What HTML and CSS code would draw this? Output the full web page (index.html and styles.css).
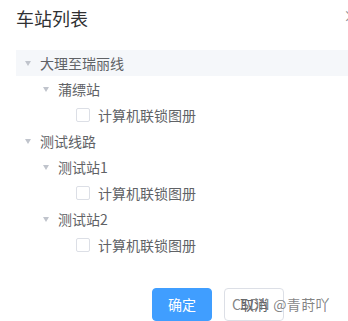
FILE: index.html
```html
<!DOCTYPE html>
<html>
<head>
<meta charset="utf-8">
<link rel="stylesheet" href="styles.css">
</head>
<body>
<div class="dialog">
  <div class="header">
    <span class="title">车站列表</span>
    <span class="close">×</span>
  </div>
  <div class="body">
    <div class="tree">
      <div class="row current"><span class="arrow"></span><span class="label">大理至瑞丽线</span></div>
      <div class="row l2"><span class="arrow"></span><span class="label">蒲缥站</span></div>
      <div class="row l3"><span class="arrow leaf"></span><span class="check"></span><span class="label">计算机联锁图册</span></div>
      <div class="row"><span class="arrow"></span><span class="label">测试线路</span></div>
      <div class="row l2"><span class="arrow"></span><span class="label">测试站1</span></div>
      <div class="row l3"><span class="arrow leaf"></span><span class="check"></span><span class="label">计算机联锁图册</span></div>
      <div class="row l2"><span class="arrow"></span><span class="label">测试站2</span></div>
      <div class="row l3"><span class="arrow leaf"></span><span class="check"></span><span class="label">计算机联锁图册</span></div>
    </div>
  </div>
  <div class="footer">
    <button class="btn primary">确定</button>
    <button class="btn">取消</button>
  </div>
  <span class="watermark">CSDN @青莳吖</span>
</div>
</body>
</html>
```
FILE: styles.css
```css
html, body {
  margin: 0;
  padding: 0;
  background: #fff;
  overflow: hidden;
}
body {
  font-family: "Noto Sans CJK SC", "Liberation Sans", sans-serif;
  width: 348px;
  height: 321px;
}
.dialog {
  position: relative;
  width: 348px;
  height: 321px;
}
.header {
  padding: 6px 16px 0 16px;
  height: 44px;
  box-sizing: border-box;
  position: relative;
}
.title {
  font-size: 18px;
  line-height: 24px;
  color: #303133;
}
.close {
  position: absolute;
  left: 343px;
  top: 5px;
  font-size: 16px;
  color: #909399;
  line-height: 20px;
}
.body {
  padding: 6px 0 0 16px;
}
.tree {
  font-size: 14px;
  color: #606266;
}
.row {
  height: 26px;
  display: flex;
  align-items: center;
}
.row.current {
  background: #f5f7fa;
}
.row.l2 { padding-left: 18px; }
.row.l3 { padding-left: 36px; }
.arrow {
  width: 24px;
  height: 26px;
  display: flex;
  align-items: center;
  justify-content: center;
  flex: none;
}
.arrow::before {
  content: "";
  display: block;
  width: 0;
  height: 0;
  border-left: 3.5px solid transparent;
  border-right: 3.5px solid transparent;
  border-top: 5px solid #c0c4cc;
  margin-left: -1px;
}
.arrow.leaf::before {
  border-top-color: transparent;
}
.check {
  width: 14px;
  height: 14px;
  box-sizing: border-box;
  border: 1px solid #dcdfe6;
  border-radius: 2px;
  background: #fff;
  margin-right: 8px;
  flex: none;
}
.label {
  line-height: 26px;
  white-space: nowrap;
}
.footer {
  display: flex;
  gap: 12px;
  padding: 30px 0 0 152px;
}
.btn {
  width: 60px;
  height: 33px;
  box-sizing: border-box;
  border: 1px solid #dcdfe6;
  border-radius: 4px;
  background: #fff;
  color: #606266;
  font-family: "Noto Sans CJK SC", "Liberation Sans", sans-serif;
  font-size: 14px;
  padding: 0;
  line-height: 31px;
}
.btn.primary {
  background: #409eff;
  border-color: #409eff;
  color: #fff;
}
.watermark {
  position: absolute;
  left: 232px;
  top: 294px;
  font-size: 14px;
  line-height: 20px;
  color: rgba(110, 110, 110, 0.85);
  white-space: nowrap;
  letter-spacing: 0.3px;
}
```
